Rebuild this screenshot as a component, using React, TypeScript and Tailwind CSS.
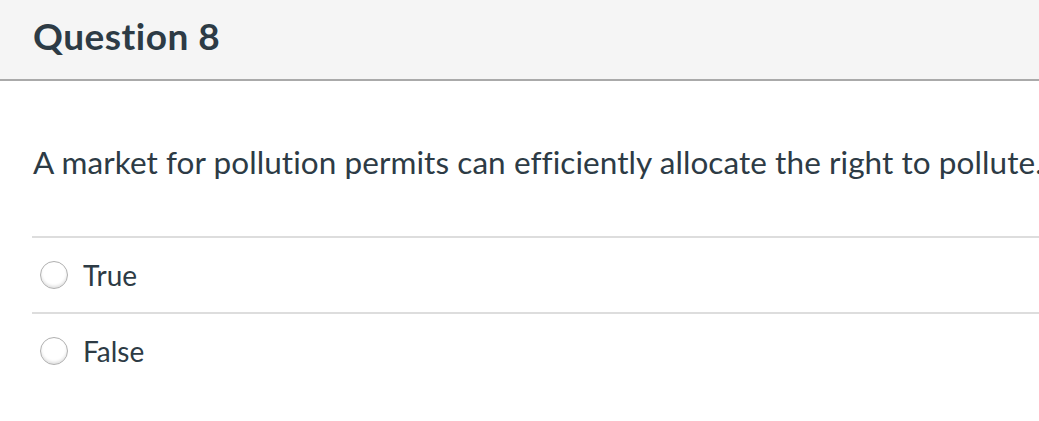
const options = ["True", "False"];

// zero-width non-joiner keeps Lato from forming its "ti" ligature
const nj = "\u200C";

export default function App() {
  return (
    <div
      className="w-[1039px] h-[421px] overflow-hidden bg-white text-[#2d3b45]"
      style={{ fontFamily: "Lato, 'Liberation Sans', sans-serif" }}
    >
      {/* Header */}
      <div className="h-[81px] bg-[#f5f5f5] border-b-2 border-[#aaaaaa] pl-[33px] pt-[12px]">
        <h2 className="text-[37px] font-bold leading-[48px] tracking-[0.5px]">{`Quest${nj}ion 8`}</h2>
      </div>

      {/* Question text */}
      <div className="pl-[33px] pt-[61px] whitespace-nowrap">
        <p className="text-[31.5px] leading-[40px] tracking-[0.07px]">
          {`A market for pollut${nj}ion permits can efficiently allocate the right to pollute.`}
        </p>
      </div>

      {/* Answers */}
      <div className="ml-[32px] mt-[54px]">
        {options.map((opt) => (
          <div
            key={opt}
            className="flex items-center gap-[15px] border-t-2 border-[#dddddd] h-[76px] pl-[8px]"
          >
            <span className="shrink-0 w-[28px] h-[28px] rounded-full border border-[#b0b0b0] bg-white shadow-[inset_0_-2px_3px_rgba(0,0,0,0.12)]" />
            <span className="text-[28px]">{opt}</span>
          </div>
        ))}
      </div>
    </div>
  );
}
